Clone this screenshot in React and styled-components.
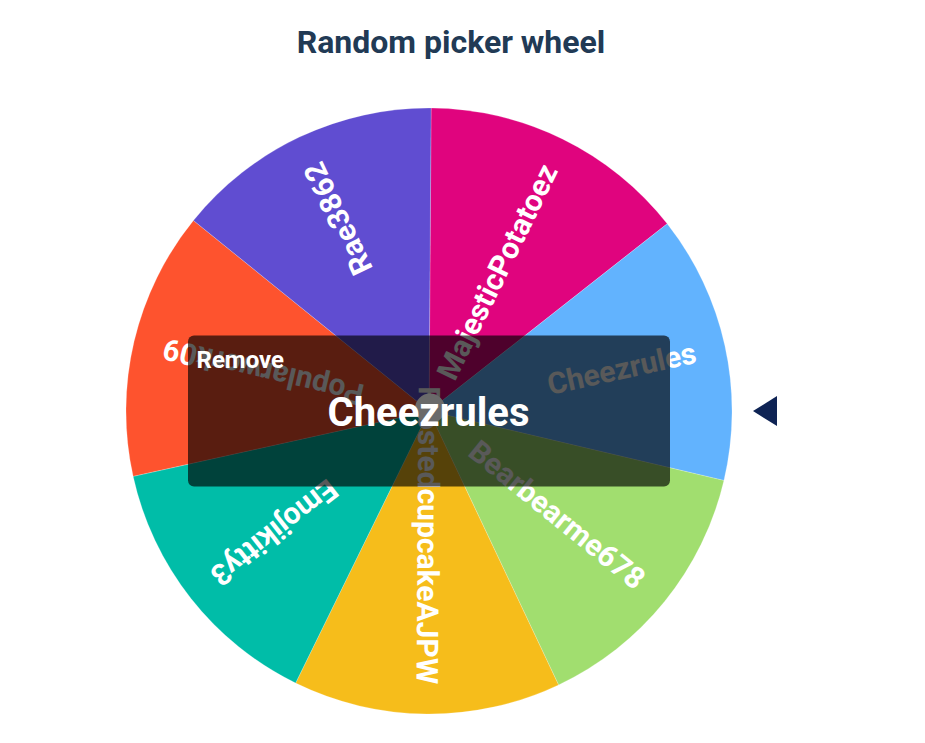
import React from "react"
import styled, { createGlobalStyle } from "styled-components"

const GlobalStyle = createGlobalStyle`
    body {
        margin: 0;
        background: #fff;
        font-family: Roboto, "Liberation Sans", sans-serif;
    }
`

const Page = styled.div`
    width: 902px;
    display: flex;
    flex-direction: column;
    align-items: center;
`

const Title = styled.h1`
    margin: 23px 0 0;
    font-size: 32px;
    font-weight: 700;
    color: #213a55;
    line-height: normal;
`

const Stage = styled.div`
    margin-top: 47px;
    display: flex;
    align-items: center;
    gap: 21px;
`

const WheelBox = styled.div`
    position: relative;
    width: 606px;
    height: 606px;
`

const WheelSvg = styled.svg`
    display: block;
    width: 606px;
    height: 606px;
`

const Label = styled.text`
    font-family: Roboto, "Liberation Sans", sans-serif;
    font-size: 30px;
    font-weight: 700;
    fill: #fff;
`

const Pointer = styled.div`
    width: 0;
    height: 0;
    border-top: 15px solid transparent;
    border-bottom: 15px solid transparent;
    border-right: 24px solid #0e2354;
`

const Overlay = styled.div`
    position: absolute;
    left: 50%;
    top: 50%;
    transform: translate(-50%, -50%);
    width: 482px;
    height: 151px;
    border-radius: 6px;
    background: rgba(0, 0, 0, 0.65);
    display: flex;
    align-items: center;
    justify-content: center;
`

const RemoveButton = styled.button`
    position: absolute;
    left: 9px;
    top: 10px;
    padding: 0;
    border: none;
    background: none;
    color: #fff;
    font-family: Roboto, "Liberation Sans", sans-serif;
    font-size: 24px;
    font-weight: 700;
    line-height: normal;
    cursor: pointer;
`

const Hub = styled.div`
    position: absolute;
    left: 50%;
    top: 50%;
    width: 30px;
    height: 30px;
    margin: -18px 0 0 -14px;
    border-radius: 50%;
    background: #6a6a6a;
`

const Winner = styled.div`
    position: relative;
    color: #fff;
    font-size: 40px;
    font-weight: 700;
    margin-top: 2px;
`

// clockwise from the top of the wheel
const entries = [
    { name: "MajesticPotatoez", color: "#e0047e" },
    { name: "Cheezrules", color: "#62b3fe" },
    { name: "Bearbearme678", color: "#a1de6f" },
    { name: "FrostedcupcakeAJPW", color: "#f6bd1b" },
    { name: "Emojikitty3", color: "#00bda8" },
    { name: "Popularwork09", color: "#fe532e" },
    { name: "Rae3862", color: "#604dd1" },
]

const C = 303
const R = 303

function point(deg, r) {
    const a = (deg * Math.PI) / 180
    return [C + r * Math.sin(a), C - r * Math.cos(a)]
}

function slicePath(from, to) {
    const [x1, y1] = point(from, R)
    const [x2, y2] = point(to, R)
    return `M${C} ${C} L${x1} ${y1} A${R} ${R} 0 0 1 ${x2} ${y2} Z`
}

const Wheel = () => {
    const step = 360 / entries.length
    const offset = 0.4
    return (
        <WheelSvg viewBox="0 0 606 606">
            {entries.map((e, i) => {
                const from = offset + i * step
                return (
                    <path key={e.name} d={slicePath(from, from + step)} fill={e.color} stroke="rgba(255,255,255,0.35)" strokeWidth="0.6" />
                )
            })}
            {entries.map((e, i) => {
                const mid = offset + i * step + step / 2
                return (
                    <Label
                        key={e.name}
                        x={273}
                        y={0}
                        textAnchor="end"
                        dominantBaseline="central"
                        transform={`translate(${C} ${C}) rotate(${mid - 90})`}
                    >
                        {e.name}
                    </Label>
                )
            })}
        </WheelSvg>
    )
}

export default function App() {
    return (
        <Page>
            <GlobalStyle />
            <Title>Random picker wheel</Title>
            <Stage>
                <WheelBox>
                    <Wheel />
                    <Overlay>
                        <RemoveButton>Remove</RemoveButton>
                        <Hub />
                        <Winner>Cheezrules</Winner>
                    </Overlay>
                </WheelBox>
                <Pointer />
            </Stage>
        </Page>
    )
}
